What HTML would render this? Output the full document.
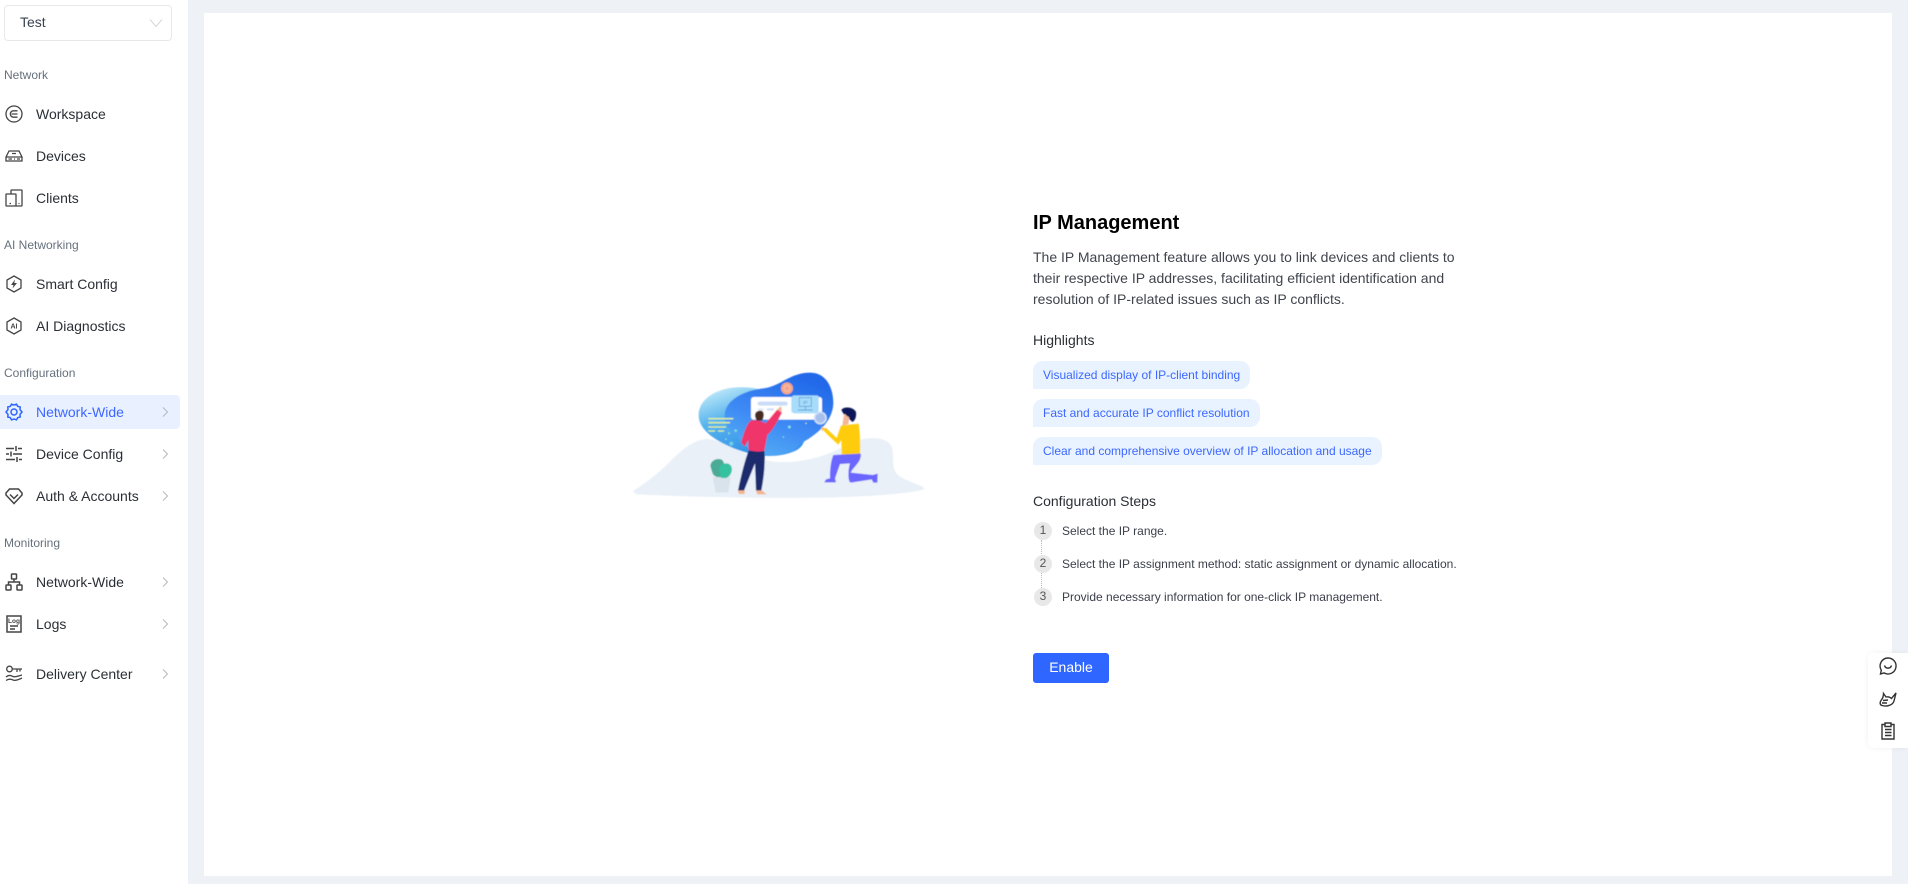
<!DOCTYPE html>
<html lang="en"><head><meta charset="utf-8"><title>IP Management</title>
<style>
*{box-sizing:border-box;margin:0;padding:0}
html,body{width:1908px;height:884px;overflow:hidden;background:#eef2f6;font-family:"Liberation Sans",Arial,sans-serif;color:#333}
.abs{position:absolute;white-space:nowrap}
#side{position:absolute;left:0;top:0;width:188px;height:884px;background:#fff}
#card{position:absolute;left:204px;top:13px;width:1688px;height:863px;background:#fff}
.sel{position:absolute;left:4px;top:5px;width:168px;height:36px;border:1px solid #e6e8ea;border-radius:4px;background:#fff}
.sel span{position:absolute;left:15px;top:8px;font-size:14px;line-height:16px;color:#3a4350}
.lab{position:absolute;left:4px;font-size:12px;line-height:14px;color:#66707c}
.it{position:absolute;left:36px;font-size:14px;line-height:16px;color:#2a2f36;white-space:nowrap}
.act{position:absolute;left:0;top:395px;width:180px;height:34px;background:#e9f0ff;border-radius:0 4px 4px 0}
svg.ic{position:absolute;overflow:visible}
.ic *{fill:none;stroke:#444;stroke-width:1.3}
.pill{position:absolute;left:1033px;height:28px;background:#e8f3ff;border-radius:10px 10px 10px 0;font-size:12px;line-height:28px;padding:0 10px;color:#3d67ff;white-space:nowrap}
.num{position:absolute;left:1034px;width:18px;height:18px;border-radius:50%;background:#e8e8e8;color:#555;font-size:12px;line-height:18px;text-align:center}
.st{position:absolute;left:1062px;font-size:12px;line-height:14px;color:#3b3f4a;white-space:nowrap}
.btn{position:absolute;left:1033px;top:653px;width:76px;height:30px;border-radius:3px;background:#2f66ff;color:#fff;font-size:14px;line-height:29px;text-align:center}
#wid{position:absolute;left:1868px;top:653px;width:40px;height:95px;background:#fff;border-radius:4px 0 0 4px;box-shadow:0 0 6px rgba(0,0,0,.06)}
</style></head><body>
<div id="side">
<div class="sel"><span>Test</span><svg style="position:absolute;left:144px;top:12px" width="14" height="10" viewBox="0 0 14 10"><path d="M1 1.500 7 8.500 13 1.500" fill="none" stroke="#d4d7db" stroke-width="1"/></svg></div>
<div class="lab" style="top:68px">Network</div>
<div class="lab" style="top:238px">AI Networking</div>
<div class="lab" style="top:366px">Configuration</div>
<div class="lab" style="top:536px">Monitoring</div>
<div class="act"></div>

<svg class="ic" style="left:5px;top:105px" width="18" height="18" viewBox="0 0 18 18"><circle cx="9" cy="9" r="8"/><path d="M12.500 5.800H8.500a3.200 3.200 0 0 0 0 6.400H12.500M6.500 9H12.500"/></svg>
<div class="it" style="top:106px">Workspace</div>
<svg class="ic" style="left:5px;top:148px" width="18" height="16" viewBox="0 0 18 16"><path d="M4 3H14L17 9V13H1V9ZM1 9H17M3.500 11H7M9 11H10M12 11H15M7 5.500H11"/></svg>
<div class="it" style="top:148px">Devices</div>
<svg class="ic" style="left:5px;top:189px" width="18" height="18" viewBox="0 0 18 18"><path d="M6 5V1.500Q6 1 6.500 1H16.500Q17 1 17 1.500V16.500Q17 17 16.500 17H1.500Q1 17 1 16.500V5.500Q1 5 1.500 5H10.500Q11 5 11 5.500V17M4.500 14.500H6M13.500 14.500H14.500"/></svg>
<div class="it" style="top:190px">Clients</div>
<svg class="ic" style="left:5px;top:275px" width="18" height="18" viewBox="0 0 18 18"><path d="M9 1 16 5V13L9 17 2 13V5Z"/><path style="fill:#444;stroke:none" d="M10 4.500 6 10H8.500L7.500 13.500 12 8H9.300Z"/></svg>
<div class="it" style="top:276px">Smart Config</div>
<svg class="ic" style="left:5px;top:317px" width="18" height="18" viewBox="0 0 18 18"><path d="M9 1 16 5V13L9 17 2 13V5Z"/><text x="9" y="11.500" text-anchor="middle" style="font:bold 7px 'Liberation Sans';fill:#444;stroke:none">AI</text></svg>
<div class="it" style="top:318px">AI Diagnostics</div>

<svg class="ic" style="left:5px;top:403px" width="18" height="18" viewBox="0 0 18 18"><path style="stroke:#2f66ff;stroke-width:1.500" d="M6.500 1.200 9 2l2.500-.8 1.200 2.200 2.500.6-.2 2.600L17 9l-2 2.400.2 2.600-2.500.6-1.200 2.200L9 16l-2.500.8-1.200-2.200-2.500-.6.2-2.600L1 9l2-2.400-.2-2.600 2.500-.6Z"/><circle style="stroke:#2f66ff;stroke-width:1.500" cx="9" cy="9" r="3"/></svg>
<div class="it" style="top:404px;color:#3d67ff">Network-Wide</div>
<svg class="ic" style="left:5px;top:445px" width="18" height="18" viewBox="0 0 18 18"><path style="stroke-width:1.500" d="M1 3.500H9M13 3.500H17M11 1V6M1 9H4M8 9H17M6 6.500V11.500M1 14.500H10M14 14.500H17M12 12V17"/></svg>
<div class="it" style="top:446px">Device Config</div>
<svg class="ic" style="left:5px;top:488px" width="18" height="17" viewBox="0 0 18 17"><path style="stroke-width:1.500" d="M4.500 1H13.500L17 5V7L9 15.500 1 7V5ZM5 6.500 9 10.500 13 6.500"/></svg>
<div class="it" style="top:488px">Auth &amp; Accounts</div>

<svg class="ic" style="left:5px;top:573px" width="18" height="18" viewBox="0 0 18 18"><rect style="stroke-width:1.500" x="6.500" y="1" width="5" height="5" rx=".6"/><rect style="stroke-width:1.500" x="1" y="12" width="5" height="5" rx=".6"/><rect style="stroke-width:1.500" x="12" y="12" width="5" height="5" rx=".6"/><path style="stroke-width:1.500" d="M9 6V9M3.500 12V9H14.500V12"/></svg>
<div class="it" style="top:574px">Network-Wide</div>
<svg class="ic" style="left:6px;top:615px" width="16" height="18" viewBox="0 0 16 18"><path style="stroke-width:1.500" d="M1 1H15V17H1ZM4 11H12M4 14H9"/><text x="8" y="8" text-anchor="middle" style="font:bold 6.500px 'Liberation Sans';fill:#444;stroke:none">Log</text></svg>
<div class="it" style="top:616px">Logs</div>
<svg class="ic" style="left:5px;top:665px" width="18" height="18" viewBox="0 0 18 18"><circle cx="4.500" cy="4" r="2.800"/><path d="M7.300 4H17M12 4V7M15 4V6.500M1 12C4 9.500 6 10.500 8 11.500S13 11 17 10M1 15.500C4 13.500 6 14 8 15S13 15 17 13"/></svg>
<div class="it" style="top:666px">Delivery Center</div>

<svg style="position:absolute;left:161px;top:406px" width="8" height="12" viewBox="0 0 8 12"><path d="M2 1.500 6.500 6 2 10.500" fill="none" stroke="#b5b8bd" stroke-width="1"/></svg>
<svg style="position:absolute;left:161px;top:448px" width="8" height="12" viewBox="0 0 8 12"><path d="M2 1.500 6.500 6 2 10.500" fill="none" stroke="#b5b8bd" stroke-width="1"/></svg>
<svg style="position:absolute;left:161px;top:490px" width="8" height="12" viewBox="0 0 8 12"><path d="M2 1.500 6.500 6 2 10.500" fill="none" stroke="#b5b8bd" stroke-width="1"/></svg>
<svg style="position:absolute;left:161px;top:576px" width="8" height="12" viewBox="0 0 8 12"><path d="M2 1.500 6.500 6 2 10.500" fill="none" stroke="#b5b8bd" stroke-width="1"/></svg>
<svg style="position:absolute;left:161px;top:618px" width="8" height="12" viewBox="0 0 8 12"><path d="M2 1.500 6.500 6 2 10.500" fill="none" stroke="#b5b8bd" stroke-width="1"/></svg>
<svg style="position:absolute;left:161px;top:668px" width="8" height="12" viewBox="0 0 8 12"><path d="M2 1.500 6.500 6 2 10.500" fill="none" stroke="#b5b8bd" stroke-width="1"/></svg>
</div>

<div id="card"></div>

<svg style="position:absolute;left:620px;top:360px" width="320" height="150" viewBox="0 0 960 450">
<defs>
<linearGradient id="g1" x1="0.700" y1="0.900" x2="0.200" y2="0"><stop offset="0" stop-color="#2f8fe8"/><stop offset="0.600" stop-color="#58b4ee"/><stop offset="1" stop-color="#bfe9f8"/></linearGradient>
<linearGradient id="g2" x1="0.700" y1="0" x2="0.200" y2="1"><stop offset="0" stop-color="#2067e8"/><stop offset="0.600" stop-color="#3f8cf5"/><stop offset="1" stop-color="#57b0f3"/></linearGradient>
<filter id="b"><feGaussianBlur stdDeviation="1.300"/></filter>
</defs>
<g filter="url(#b)">
<path fill="#e9f0f8" d="M40 392C70 375 110 345 150 305C185 270 215 245 250 238C300 232 340 270 420 296C500 320 600 300 680 255C730 230 790 225 812 255C830 285 805 325 840 350C870 368 905 375 914 386C900 398 760 410 600 413C400 416 150 408 55 403C45 402 40 398 40 392Z"/>
<path fill="url(#g1)" d="M236 160C240 115 290 85 350 82C420 80 500 100 540 170C565 220 560 260 520 275C470 295 410 290 350 268C290 245 232 210 236 160Z"/>
<path fill="url(#g2)" d="M314 165C316 120 370 92 430 85C480 80 510 38 570 38C620 38 640 85 640 130C638 180 600 215 560 240C520 262 545 275 470 285C410 290 385 270 360 240C335 210 312 200 314 165Z"/>
<circle cx="501" cy="85" r="18" fill="#f5a58a"/><circle cx="501" cy="85" r="9" fill="none" stroke="#f9d0bd" stroke-width="2"/>
<rect x="393" y="111" width="213" height="68" rx="8" fill="#fff"/>
<rect x="413" y="125" width="90" height="12" rx="6" fill="#c9dcf7"/>
<rect x="413" y="145" width="18" height="6" rx="3" fill="#dfe9f8"/><rect x="440" y="145" width="22" height="6" rx="3" fill="#c9dcf7"/>
<path fill="#a7dcfa" d="M514 116C514 110 518 106 524 106H590C594 106 596 108 596 112V150C596 156 592 160 586 160H524C518 160 514 156 514 150Z"/>
<rect x="538" y="113" width="36" height="26" fill="none" stroke="#4a8fd0" stroke-width="2"/>
<text x="556" y="132" text-anchor="middle" font-family="Liberation Sans" font-size="14" fill="#4a8fd0">IP</text>
<path d="M556 139V149M534 150H578" stroke="#4a8fd0" stroke-width="2" fill="none"/>
<path d="M265 176H340M265 188H330M265 201H318M265 213H285M294 213H312" stroke="#e7f38c" stroke-width="4" fill="none"/>
<circle cx="347" cy="212" r="4" fill="#7fe0d0"/><circle cx="334" cy="251" r="6" fill="#6fd0e8"/><circle cx="318" cy="238" r="2" fill="#a4f0d8"/><circle cx="508" cy="201" r="4" fill="#8fe8d8"/><circle cx="490" cy="231" r="2" fill="#a4f0d8"/><circle cx="558" cy="190" r="2" fill="#e7f38c"/><circle cx="327" cy="220" r="2" fill="#e7f38c"/>
<path fill="#d8e3ec" d="M278 351H332L325 397H287Z"/>
<path fill="#4aab95" d="M271 318C272 302 290 293 305 299C315 306 318 330 305 350C295 354 280 350 277 338Z"/>
<path fill="#36c2a1" d="M298 325C300 310 328 302 335 322C338 335 330 350 318 354H303Z"/>
<path fill="#1e2a6e" d="M386 272H433C436 310 432 350 424 392H408L405 310 372 392H354C365 340 375 300 386 272Z"/>
<path fill="#f0356b" d="M392 182C400 178 425 182 437 190L472 148L486 158C472 185 458 212 442 225L433 273C418 276 398 275 385 270L385 240L374 260L363 247C372 220 378 195 392 182Z"/>
<path fill="#f3b490" d="M470 150L483 138L486 155ZM353 391L374 391L374 402H357ZM408 391L425 391L440 403H412Z"/>
<path fill="#4a2a22" d="M405 165C405 155 418 148 428 154C434 160 431 178 425 182H411C408 178 405 172 405 165Z"/>
<path fill="#a6c0ee" stroke="#cfe0f9" stroke-width="5" d="M584 174a17 17 0 1 1 34 0a17 17 0 1 1-34 0Z"/>
<path fill="#f7b58a" d="M604 198 615 207 606 214Z"/>
<path fill="#ffcc11" d="M663 197L716 191C720 220 722 255 720 283C700 290 678 289 665 283L664 240 655 254C640 240 622 225 608 208L617 203L650 234Z"/>
<path fill="#0c1458" d="M664 150C670 139 700 139 708 156C710 172 704 183 697 186C690 178 680 172 676 162L672 164Z"/>
<path fill="#f4b896" d="M672 162L688 172L685 193L667 197Z"/>
<path fill="#6b66ff" d="M640 285L722 281C726 305 700 320 692 338L758 345L773 341L772 368H760L755 358L692 368C682 362 685 325 690 310L660 312L645 355L648 367H613L618 358L630 355C630 330 632 305 640 285Z"/>
</g>
</svg>

<div class="abs" style="left:1033px;top:211px;font-size:20px;font-weight:bold;line-height:24px;color:#000">IP Management</div>
<div class="abs" style="left:1033px;top:247px;font-size:14px;line-height:21px;color:#40444d">The IP Management feature allows you to link devices and clients to<br>their respective IP addresses, facilitating efficient identification and<br>resolution of IP-related issues such as IP conflicts.</div>
<div class="abs" style="left:1033px;top:332px;font-size:14px;line-height:16px;color:#2a2f36">Highlights</div>
<div class="pill" style="top:361px;width:217px">Visualized display of IP-client binding</div>
<div class="pill" style="top:399px;width:227px">Fast and accurate IP conflict resolution</div>
<div class="pill" style="top:437px;width:349px">Clear and comprehensive overview of IP allocation and usage</div>
<div class="abs" style="left:1033px;top:493px;font-size:14px;line-height:16px;color:#2a2f36">Configuration Steps</div>
<div style="position:absolute;left:1041px;top:540px;height:48px;border-left:1px dotted #bbb"></div>
<div class="num" style="top:522px;line-height:17px">1</div><div class="st" style="top:524px">Select the IP range.</div>
<div class="num" style="top:555px;line-height:17px">2</div><div class="st" style="top:557px">Select the IP assignment method: static assignment or dynamic allocation.</div>
<div class="num" style="top:588px;line-height:17px">3</div><div class="st" style="top:590px">Provide necessary information for one-click IP management.</div>
<div class="btn">Enable</div>

<div id="wid">
<svg class="ic" style="left:11px;top:4px" width="18" height="18" viewBox="0 0 18 18"><path style="stroke:#333;stroke-width:1.400" d="M9 1a8 8 0 1 1-4 14.900L1.500 17l.8-3.800A8 8 0 0 1 9 1ZM5.500 8.500C6.500 12 11.500 12 12.500 8.500"/></svg>
<svg class="ic" style="left:11px;top:37px" width="18" height="18" viewBox="0 0 18 18"><path style="stroke:#333;stroke-width:1.400" d="M4.500 3.500 7 7C9 6.500 11 7 12.500 8.500L17 3 15 11C14 15 8 17 3 15.500 1 15 .5 12.500 2 10.500 3.500 8.500 4.500 7 4.500 3.500ZM3 13H8M4 10.500 9 10"/></svg>
<svg class="ic" style="left:11px;top:69px" width="18" height="18" viewBox="0 0 18 18"><path style="stroke:#333;stroke-width:1.400" d="M6 2.500H3V17H15V2.500H12M6 1H12V4.500H6ZM6 7.500H12.500M6 10.500H12.500M6 13.500H12.500"/></svg>
</div>
</body></html>
